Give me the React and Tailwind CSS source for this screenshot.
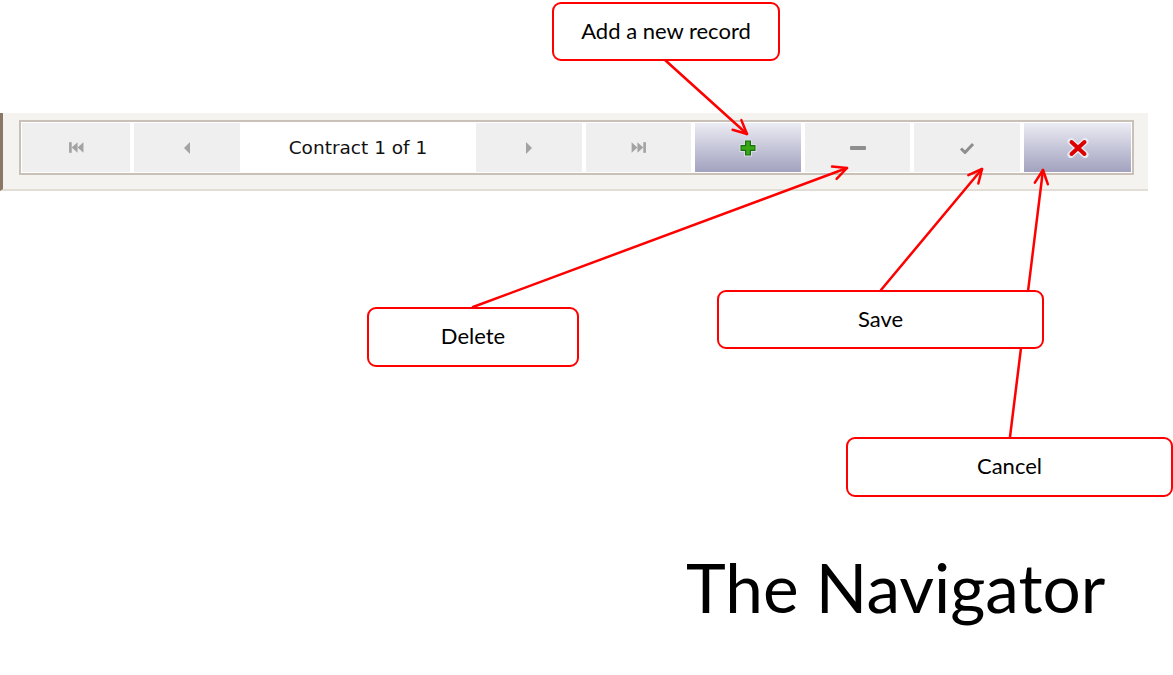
import React from 'react';

// record navigator toolbar with callouts pointing at each action

const GrayBtn = ({ w, children }) => (
  <div className={`${w} h-full bg-[#efefef] flex items-center justify-center`}>{children}</div>
);

const PurpleBtn = ({ w, children }) => (
  <div className={`${w} h-full bg-gradient-to-b from-[#ececf4] to-[#a2a2bf] flex items-center justify-center`}>
    {children}
  </div>
);

const FirstIcon = () => (
  <svg width="17" height="13" viewBox="0 0 16 12">
    <rect x="1" y="1" width="2.5" height="10" fill="#a3a3a3" />
    <polygon points="3.5,6 9,1 9,11" fill="#a3a3a3" />
    <polygon points="9,6 14.5,1 14.5,11" fill="#a3a3a3" />
  </svg>
);

const LastIcon = () => (
  <svg width="17" height="13" viewBox="0 0 16 12">
    <polygon points="1.5,1 7,6 1.5,11" fill="#a3a3a3" />
    <polygon points="7,1 12.5,6 7,11" fill="#a3a3a3" />
    <rect x="12.5" y="1" width="2.5" height="10" fill="#a3a3a3" />
  </svg>
);

const PrevIcon = () => (
  <svg width="8" height="14" viewBox="0 0 8 14">
    <polygon points="1,7 7,1 7,13" fill="#a3a3a3" />
  </svg>
);

const NextIcon = () => (
  <svg width="8" height="14" viewBox="0 0 8 14">
    <polygon points="1,1 7,7 1,13" fill="#a3a3a3" />
  </svg>
);

const PlusIcon = () => (
  <svg width="22" height="22" viewBox="0 0 22 22">
    <path d="M11 2.5v17M2.5 11h17" stroke="#d8dce6" strokeWidth="8" />
    <path d="M11 3.5v15M3.5 11h15" stroke="#1d6e12" strokeWidth="6" />
    <path d="M11 4.5v13M4.5 11h13" stroke="#38a816" strokeWidth="3.5" />
  </svg>
);

const MinusIcon = () => (
  <svg width="18" height="6" viewBox="0 0 18 6">
    <rect x="1" y="1" width="16" height="4" rx="1" fill="#8e8e8e" />
  </svg>
);

const CheckIcon = () => (
  <svg width="16" height="14" viewBox="0 0 16 14">
    <path d="M2 7.5l4 4L14 3" stroke="#8e8e8e" strokeWidth="3" fill="none" strokeLinejoin="round" />
  </svg>
);

const CrossIcon = () => (
  <svg width="22" height="20" viewBox="0 0 22 20">
    <path d="M4 3.5l14 13M18 3.5l-14 13" stroke="#e8ecf2" strokeWidth="7" strokeLinecap="round" />
    <path d="M4.5 4l13 12M17.5 4l-13 12" stroke="#dd0000" strokeWidth="4" strokeLinecap="round" />
  </svg>
);

const arrows = [
  { from: [665, 60], to: [747, 134] },
  { from: [473, 307], to: [847, 168] },
  { from: [881, 290], to: [982, 169] },
  { from: [1010, 437], to: [1043, 170] },
];

function Arrow({ from, to }) {
  const [x1, y1] = from;
  const [x2, y2] = to;
  const a = Math.atan2(y1 - y2, x1 - x2);
  const len = 15;
  const spread = 0.45;
  const h1 = [x2 + len * Math.cos(a + spread), y2 + len * Math.sin(a + spread)];
  const h2 = [x2 + len * Math.cos(a - spread), y2 + len * Math.sin(a - spread)];
  return (
    <g stroke="#ff0000" strokeWidth="2.5" fill="none" strokeLinecap="round">
      <line x1={x1} y1={y1} x2={x2} y2={y2} />
      <polyline points={`${h1[0]},${h1[1]} ${x2},${y2} ${h2[0]},${h2[1]}`} strokeLinejoin="round" />
    </g>
  );
}

const Callout = ({ className, children }) => (
  <div
    className={`absolute bg-white border-2 border-[#ff0000] rounded-[9px] flex items-center justify-center pb-[3px] text-[22px] text-black ${className}`}
  >
    {children}
  </div>
);

export default function App() {
  return (
    <div className="relative w-[1173px] h-[675px] bg-white overflow-hidden font-['Lato',sans-serif]">
      {/* toolbar strip */}
      <div className="pt-[113px]">
        <div className="w-[1148px] h-[78px] bg-[#f5f3ef] border-l-[3px] border-l-[#8a7866] border-b-2 border-b-[#e2ddd5] pl-[16px] pt-[7px]">
          <div className="w-[1115px] h-[55px] border-2 border-[#c9c1b7] bg-white p-px flex gap-1">
            <GrayBtn w="w-[108px]"><FirstIcon /></GrayBtn>
            <GrayBtn w="w-[106px]"><PrevIcon /></GrayBtn>
            <div className="w-[228px] h-full flex items-center justify-center text-[18.5px] text-[#111] font-['DejaVu_Sans',sans-serif]">
              Contract 1 of 1
            </div>
            <GrayBtn w="w-[106px]"><NextIcon /></GrayBtn>
            <GrayBtn w="w-[105px]"><LastIcon /></GrayBtn>
            <PurpleBtn w="w-[106px]"><PlusIcon /></PurpleBtn>
            <GrayBtn w="w-[105px]"><MinusIcon /></GrayBtn>
            <GrayBtn w="w-[106px]"><CheckIcon /></GrayBtn>
            <PurpleBtn w="w-[107px]"><CrossIcon /></PurpleBtn>
          </div>
        </div>
      </div>

      <h1 className="mt-[362px] ml-[686px] text-[67.5px] leading-none text-black font-normal">The Navigator</h1>

      {/* callout arrows sit under the boxes */}
      <svg className="absolute inset-0" width="1173" height="675">
        {arrows.map((a, i) => (
          <Arrow key={i} from={a.from} to={a.to} />
        ))}
      </svg>

      <Callout className="left-[552px] top-[2px] w-[228px] h-[59px]">Add a new record</Callout>
      <Callout className="left-[367px] top-[307px] w-[212px] h-[60px]">Delete</Callout>
      <Callout className="left-[717px] top-[290px] w-[327px] h-[59px]">Save</Callout>
      <Callout className="left-[846px] top-[437px] w-[327px] h-[60px]">Cancel</Callout>
    </div>
  );
}
